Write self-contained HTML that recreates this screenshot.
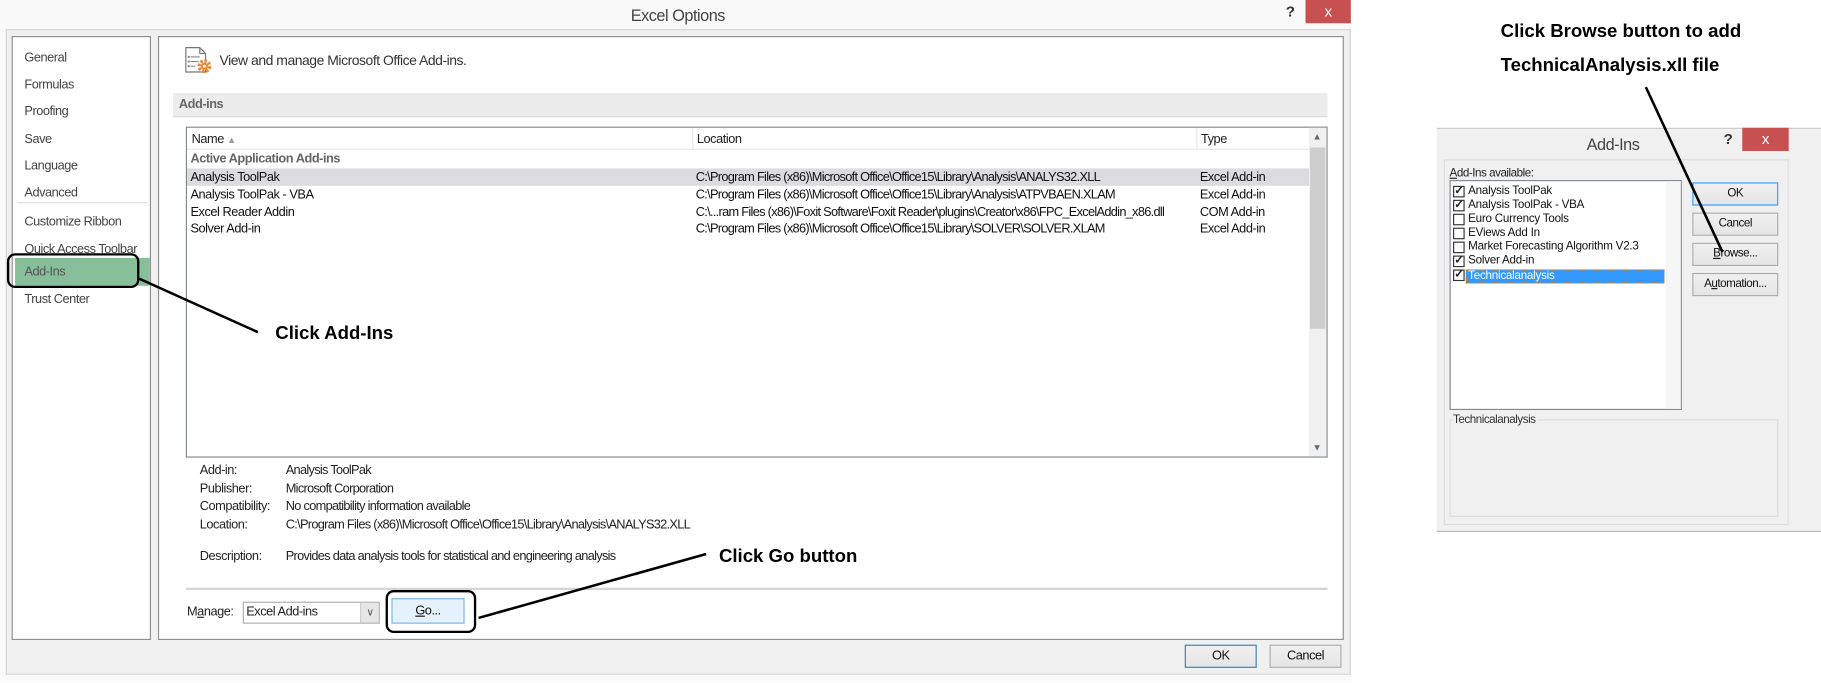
<!DOCTYPE html>
<html><head><meta charset="utf-8"><style>
*{margin:0;padding:0;box-sizing:border-box}
html,body{width:1821px;height:683px;overflow:hidden;background:#fff;font-family:"Liberation Sans",sans-serif;font-size:11px;color:#222;letter-spacing:-0.4px}
#w{position:absolute;left:0;top:0;width:1568px;height:588px;transform:scale(1.1615);transform-origin:0 0}
.a{position:absolute;white-space:nowrap}
.btn{position:absolute;border:1px solid #acacac;background:linear-gradient(#f0f0f0,#e5e5e5);text-align:center;color:#111}
.ann{position:absolute;font-weight:bold;font-size:16px;color:#000;white-space:nowrap;letter-spacing:0}
.ck{position:absolute;width:10px;height:10px;border:1px solid #333;background:#fff;font-size:10px;line-height:8px;text-align:center;font-weight:bold;letter-spacing:0}
</style></head><body><div id="w">
<div class="a" style="left:0;top:0;width:1163px;height:586px;background:#f9f9f9"></div>
<div class="a" style="left:543px;top:5px;font-size:14px;color:#444">Excel Options</div>
<div class="a" style="left:1107px;top:2px;font-size:13px;font-weight:bold;color:#333">?</div>
<div class="a" style="left:1124px;top:0;width:39px;height:20px;background:#c75050;color:#fff;text-align:center;font-size:13px;line-height:19px">x</div>
<div class="a" style="left:5px;top:25px;width:1158px;height:556px;background:#f0f0f0;border:1px solid #d6d6d6"></div>
<div class="a" style="left:10px;top:31px;width:120px;height:520px;background:#fff;border:1px solid #8e8f8f"></div>
<div class="a" style="left:21px;top:39px;color:#444;line-height:23.2px">General<br>Formulas<br>Proofing<br>Save<br>Language<br>Advanced</div>
<div class="a" style="left:15px;top:174px;width:112px;height:1px;background:#ddd"></div>
<div class="a" style="left:21px;top:180px;color:#444;line-height:23.5px">Customize Ribbon<br>Quick Access Toolbar</div>
<div class="a" style="left:13px;top:222px;width:116px;height:24px;background:#86bf9a"></div>
<div class="a" style="left:21px;top:228px;color:#555">Add-Ins</div>
<div class="a" style="left:6px;top:218px;width:114px;height:30px;border:2px solid #000;border-radius:7px"></div>
<div class="a" style="left:21px;top:252px;color:#444">Trust Center</div>

<div class="a" style="left:136px;top:31px;width:1021px;height:520px;background:#fff;border:1px solid #8e8f8f"></div>
<svg class="a" style="left:159px;top:40px" width="28" height="24" viewBox="0 0 28 24"><path d="M1 1h12l5 5v16H1z" fill="#fff" stroke="#777"/><path d="M13 1v5h5" fill="none" stroke="#777"/><g stroke="#888"><path d="M5 9h8M5 13h7M5 17h4"/></g><circle cx="3.5" cy="9" r="1" fill="#888"/><circle cx="3.5" cy="13" r="1" fill="#888"/><circle cx="3.5" cy="17" r="1" fill="#888"/><circle cx="17" cy="17" r="4.5" fill="none" stroke="#e8893a" stroke-width="3" stroke-dasharray="2.2 1.3"/><circle cx="17" cy="17" r="3" fill="#e8893a"/><circle cx="17" cy="17" r="1.3" fill="#fff"/></svg>
<div class="a" style="left:189px;top:45px;font-size:12px;color:#333">View and manage Microsoft Office Add-ins.</div>
<div class="a" style="left:149px;top:80px;width:994px;height:21px;background:#ececec;border-bottom:1px solid #ddd"></div>
<div class="a" style="left:154px;top:84px;font-weight:bold;color:#666">Add-ins</div>

<div class="a" style="left:160px;top:109px;width:983px;height:285px;border:1px solid #828790;background:#fff"></div>
<div class="a" style="left:161px;top:110px;width:966px;height:19px;border-bottom:1px solid #e3e8f0"></div>
<div class="a" style="left:596px;top:110px;width:1px;height:19px;background:#e3e8f0"></div>
<div class="a" style="left:1030px;top:110px;width:1px;height:19px;background:#e3e8f0"></div>
<div class="a" style="left:165px;top:114px">Name <span style="color:#999;font-size:8px">▲</span></div>
<div class="a" style="left:600px;top:114px">Location</div>
<div class="a" style="left:1034px;top:114px">Type</div>
<div class="a" style="left:1127px;top:110px;width:15px;height:283px;background:#f0f0f0"></div>
<div class="a" style="left:1128px;top:127px;width:13px;height:156px;background:#cdcdcd"></div>
<div class="a" style="left:1130px;top:113px;font-size:8px;color:#666">▲</div>
<div class="a" style="left:1130px;top:381px;font-size:8px;color:#666">▼</div>
<div class="a" style="left:164px;top:131px;font-weight:bold;color:#666">Active Application Add-ins</div>
<div class="a" style="left:161px;top:145px;width:966px;height:15px;background:#dcdce0"></div>
<div class="a" style="left:164px;top:146px;line-height:14.8px;color:#111">Analysis ToolPak<br>Analysis ToolPak - VBA<br>Excel Reader Addin<br>Solver Add-in</div>
<div class="a" style="left:599px;top:146px;line-height:14.8px;color:#111;letter-spacing:-0.6px">C:\Program Files (x86)\Microsoft Office\Office15\Library\Analysis\ANALYS32.XLL<br>C:\Program Files (x86)\Microsoft Office\Office15\Library\Analysis\ATPVBAEN.XLAM<br>C:\...ram Files (x86)\Foxit Software\Foxit Reader\plugins\Creator\x86\FPC_ExcelAddin_x86.dll<br>C:\Program Files (x86)\Microsoft Office\Office15\Library\SOLVER\SOLVER.XLAM</div>
<div class="a" style="left:1033px;top:146px;line-height:14.8px;color:#111">Excel Add-in<br>Excel Add-in<br>COM Add-in<br>Excel Add-in</div>

<div class="a" style="left:172px;top:398px;line-height:15.7px;color:#222">Add-in:<br>Publisher:<br>Compatibility:<br>Location:</div>
<div class="a" style="left:246px;top:398px;line-height:15.7px;color:#222;letter-spacing:-0.6px">Analysis ToolPak<br>Microsoft Corporation<br>No compatibility information available<br>C:\Program Files (x86)\Microsoft Office\Office15\Library\Analysis\ANALYS32.XLL</div>
<div class="a" style="left:172px;top:473px">Description:</div>
<div class="a" style="left:246px;top:473px;letter-spacing:-0.6px">Provides data analysis tools for statistical and engineering analysis</div>
<div class="a" style="left:160px;top:506px;width:983px;height:2px;background:#d5d5d5"></div>
<div class="a" style="left:161px;top:521px">M<u>a</u>nage:</div>
<div class="a" style="left:209px;top:518px;width:118px;height:19px;border:1px solid #abadb3;background:#fff"></div>
<div class="a" style="left:212px;top:521px">Excel Add-ins</div>
<div class="a" style="left:310px;top:519px;width:16px;height:17px;background:#e6e6e6;border-left:1px solid #ccc;text-align:center;font-size:9px;line-height:17px;color:#555">∨</div>
<div class="btn" style="left:337px;top:515px;width:63px;height:22px;background:#e5f1fb;border-color:#7eb4ea;line-height:20px"><u>G</u>o...</div>
<div class="a" style="left:332px;top:508px;width:78px;height:37px;border:2px solid #000;border-radius:7px"></div>
<div class="btn" style="left:1020px;top:555px;width:62px;height:20px;border-color:#3c7fb1;line-height:18px">OK</div>
<div class="btn" style="left:1093px;top:555px;width:62px;height:20px;line-height:18px">Cancel</div>

<div class="a" style="left:1237px;top:110px;width:331px;height:348px;background:#f0f0f0;border-top:1px solid #ccc;border-bottom:1px solid #bbb"></div>
<div class="a" style="left:1366px;top:116px;font-size:14px;color:#444">Add-Ins</div>
<div class="a" style="left:1484px;top:112px;font-size:13px;font-weight:bold;color:#333">?</div>
<div class="a" style="left:1500px;top:110px;width:40px;height:20px;background:#c75050;color:#fff;text-align:center;font-size:13px;line-height:19px">x</div>
<div class="a" style="left:1243px;top:137px;width:297px;height:315px;border:1px solid #ddd"></div>
<div class="a" style="left:1248px;top:144px;font-size:10px"><u>A</u>dd-Ins available:</div>
<div class="a" style="left:1248px;top:155px;width:200px;height:198px;border:1px solid #828790;background:#fff"></div>
<div class="a" style="left:1434px;top:156px;width:13px;height:196px;background:#f6f6f6"></div>
<div class="a" style="left:1262px;top:232px;width:171px;height:12px;background:#3399ff;border:1px dotted #c0802a"></div>
<div class="a" style="left:1264px;top:159px;font-size:10px;line-height:12.1px;color:#111;letter-spacing:-0.2px">Analysis ToolPak<br>Analysis ToolPak - VBA<br>Euro Currency Tools<br>EViews Add In<br>Market Forecasting Algorithm V2.3<br>Solver Add-in<br><span style="color:#fff">Technicalanalysis</span></div>
<div class="ck" style="left:1251px;top:160px">✓</div>
<div class="ck" style="left:1251px;top:172px">✓</div>
<div class="ck" style="left:1251px;top:184px"></div>
<div class="ck" style="left:1251px;top:196px"></div>
<div class="ck" style="left:1251px;top:208px"></div>
<div class="ck" style="left:1251px;top:220px">✓</div>
<div class="ck" style="left:1251px;top:232px">✓</div>
<div class="btn" style="left:1457px;top:157px;width:74px;height:20px;border-color:#3399ff;line-height:18px;font-size:10px">OK</div>
<div class="btn" style="left:1457px;top:183px;width:74px;height:20px;line-height:18px;font-size:10px">Cancel</div>
<div class="btn" style="left:1457px;top:209px;width:74px;height:20px;line-height:18px;font-size:10px"><u>B</u>rowse...</div>
<div class="btn" style="left:1457px;top:235px;width:74px;height:20px;line-height:18px;font-size:10px">A<u>u</u>tomation...</div>
<div class="a" style="left:1248px;top:361px;width:283px;height:84px;border:1px solid #dcdcdc"></div>
<div class="a" style="left:1251px;top:356px;font-size:10px;background:#f0f0f0;padding-right:2px;color:#333">Technicalanalysis</div>

<svg class="a" style="left:0;top:0" width="1568" height="588"><g stroke="#000" stroke-width="2.2" fill="none"><path d="M120 240L222 286"/><path d="M412 532L608 477"/><path d="M1417 75L1483 217"/></g></svg>
<div class="ann" style="left:237px;top:279px">Click Add-Ins</div>
<div class="ann" style="left:619px;top:471px">Click Go button</div>
<div class="ann" style="left:1292px;top:19px">Click Browse button to add</div>
<div class="ann" style="left:1292px;top:48px">TechnicalAnalysis.xll file</div>
</div></body></html>
